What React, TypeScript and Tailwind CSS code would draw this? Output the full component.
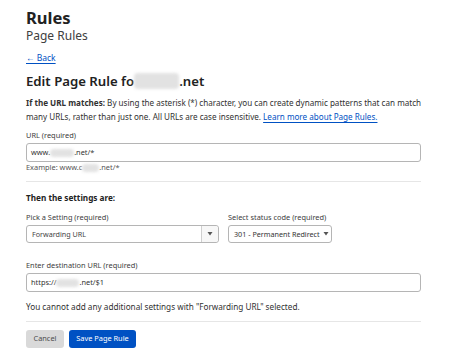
import React from 'react'

function Blur({ w, h = 10 }: { w: number; h?: number }) {
  return (
    <span
      className="inline-block align-middle bg-[#e2e2e2] blur-[1.5px] rounded-sm"
      style={{ width: w, height: h }}
    />
  )
}

function Caret() {
  return (
    <svg width="6" height="4" viewBox="0 0 6 4" className="inline-block shrink-0">
      <path d="M0.5 0 L5.5 0 L3 3.5 Z" fill="#555" />
    </svg>
  )
}

export default function App() {
  return (
    <main
      className="bg-white w-[474px] h-[357px] overflow-hidden text-[#313131]"
      style={{ fontFamily: '"Noto Sans", "Open Sans", sans-serif' }}
    >
      <div className="pl-[26px] w-[421px] flex flex-col">
        <h1 className="mt-[8px] text-[16.5px] leading-[20px] font-bold text-[#222]">Rules</h1>
        <div className="text-[12px] leading-[16px] text-[#404040]">Page Rules</div>
        <a className="mt-[8px] text-[8.5px] leading-[12px] text-[#0051c3] underline underline-offset-2 w-fit">
          ← Back
        </a>
        <h2 className="mt-[9px] text-[13.2px] leading-[16px] font-semibold text-[#222] flex items-center">
          <span>Edit Page Rule fo</span>
          <Blur w={45} h={16} />
          <span>.net</span>
        </h2>
        <p className="mt-[7px] text-[8.1px] leading-[13.5px] whitespace-nowrap">
          <span className="font-bold">If the URL matches:</span> By using the asterisk (*) character, you can create
          dynamic patterns that can match
          <br />
          many URLs, rather than just one. All URLs are case insensitive.{' '}
          <a className="text-[#0051c3] underline underline-offset-2">Learn more about Page Rules.</a>
        </p>
        <label className="mt-[6px] text-[7.4px] leading-[12px] text-[#404040]">URL (required)</label>
        <div className="mt-[2px] h-[19px] border border-[#b5b5b5] rounded-[3px] flex items-center px-[4px] text-[7.4px] text-[#333]">
          www.<Blur w={24} h={8} />.net/*
        </div>
        <div className="text-[7.4px] leading-[11px] text-[#555] flex items-center">
          Example: www.c<Blur w={17} h={8} />.net/*
        </div>
        <hr className="mt-[8px] border-0 h-px bg-[#e6e6e6]" />
        <div className="mt-[9px] text-[8.2px] leading-[13px] font-bold text-[#222]">Then the settings are:</div>
        <div className="mt-[7px] flex gap-[9px]">
          <div className="flex flex-col w-[193px]">
            <label className="text-[7.4px] leading-[12px] text-[#404040]">Pick a Setting (required)</label>
            <div className="mt-[2px] h-[18px] border border-[#b5b5b5] rounded-[3px] flex text-[7.2px] text-[#444]">
              <div className="flex-1 flex items-center px-[5px]">Forwarding URL</div>
              <div className="w-[17px] border-l border-[#cfcfcf] bg-[#f7f7f7] rounded-r-[3px] flex items-center justify-center">
                <Caret />
              </div>
            </div>
          </div>
          <div className="flex flex-col w-[104px]">
            <label className="text-[7.4px] leading-[12px] text-[#404040] whitespace-nowrap">
              Select status code (required)
            </label>
            <div className="mt-[2px] h-[18px] border border-[#b5b5b5] rounded-[3px] flex items-center gap-[3px] px-[5px] text-[7.2px] text-[#333] whitespace-nowrap">
              301 - Permanent Redirect <Caret />
            </div>
          </div>
        </div>
        <label className="mt-[16px] text-[7.4px] leading-[12px] text-[#404040]">Enter destination URL (required)</label>
        <div className="mt-[2px] h-[19px] border border-[#b5b5b5] rounded-[3px] flex items-center px-[4px] text-[7.4px] text-[#333]">
          https://<Blur w={23} h={8} />.net/$1
        </div>
        <div className="mt-[8px] text-[8.2px] leading-[13px] text-[#313131]">
          You cannot add any additional settings with "Forwarding URL" selected.
        </div>
        <hr className="mt-[8px] border-0 h-px bg-[#e6e6e6]" />
        <div className="mt-[8px] flex gap-[5px]">
          <button className="h-[18px] w-[38px] rounded-[3px] bg-[#d9d9d9] text-[7.4px] text-[#4d4d4d]">Cancel</button>
          <button className="h-[18px] w-[67px] rounded-[3px] bg-[#0051c3] text-[7.4px] text-white">Save Page Rule</button>
        </div>
      </div>
    </main>
  )
}
